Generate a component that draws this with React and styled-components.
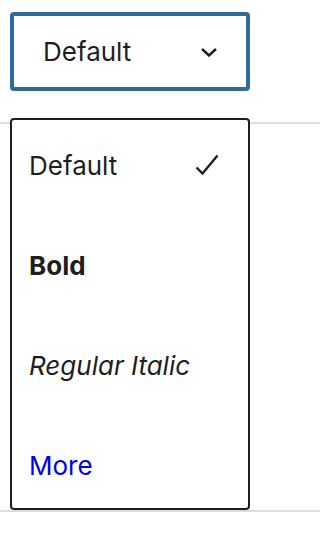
import React from "react";
import styled, { createGlobalStyle } from "styled-components";

const Global = createGlobalStyle`
  html, body { margin: 0; padding: 0; background: #fff; }
  body { font-family: Inter, "Noto Sans", sans-serif; color: #1e1e1e; }
`;

const Page = styled.div`
  width: 100%;
  padding-top: 12px;
  display: flex;
  flex-direction: column;
`;

const Trigger = styled.button`
  box-sizing: border-box;
  margin-left: 10px;
  width: 240px;
  height: 79px;
  display: flex;
  align-items: center;
  justify-content: space-between;
  padding: 0 28px 0 29px;
  border: 4px solid #2f6a9d;
  border-radius: 4px;
  background: #fff;
  font-family: Inter, "Noto Sans", sans-serif;
  font-size: 26px;
  color: #1e1e1e;
  cursor: pointer;
`;

const Panel = styled.div`
  position: relative;
  margin-top: 31px;
  height: 386px;
  border-top: 2px solid #dddddd;
  border-bottom: 2px solid #dddddd;
`;

const Menu = styled.ul`
  position: absolute;
  top: -6px;
  left: 10px;
  box-sizing: border-box;
  width: 240px;
  height: 392px;
  margin: 0;
  padding: 0 29px 0 17px;
  list-style: none;
  display: flex;
  flex-direction: column;
  gap: 10px;
  background: #fff;
  border: 2px solid #1e1e1e;
  border-radius: 4px;
`;

const Item = styled.li`
  height: 90px;
  flex: none;
  display: flex;
  align-items: center;
  justify-content: space-between;
  font-size: 26px;
  font-weight: ${(p) => (p.$bold ? 700 : 400)};
  font-style: ${(p) => (p.$italic ? "italic" : "normal")};
  color: ${(p) => (p.$link ? "#0000ee" : "#1e1e1e")};
`;

const Chevron = () => (
  <svg width="18" height="10" viewBox="0 0 18 10" fill="none">
    <path d="M2 2l7 6.5L16 2" stroke="#1e1e1e" strokeWidth="2.4" />
  </svg>
);

const Check = () => (
  <svg width="24" height="22" viewBox="0 0 24 22" fill="none">
    <path d="M1.5 13.5L7.5 19.5L22.5 1.5" stroke="#1e1e1e" strokeWidth="2.4" />
  </svg>
);

export default function App() {
  return (
    <>
      <Global />
      <Page>
        <Trigger>
          <span>Default</span>
          <Chevron />
        </Trigger>
        <Panel>
          <Menu>
            <Item>
              <span>Default</span>
              <Check />
            </Item>
            <Item $bold>Bold</Item>
            <Item $italic>Regular Italic</Item>
            <Item $link>More</Item>
          </Menu>
        </Panel>
      </Page>
    </>
  );
}
